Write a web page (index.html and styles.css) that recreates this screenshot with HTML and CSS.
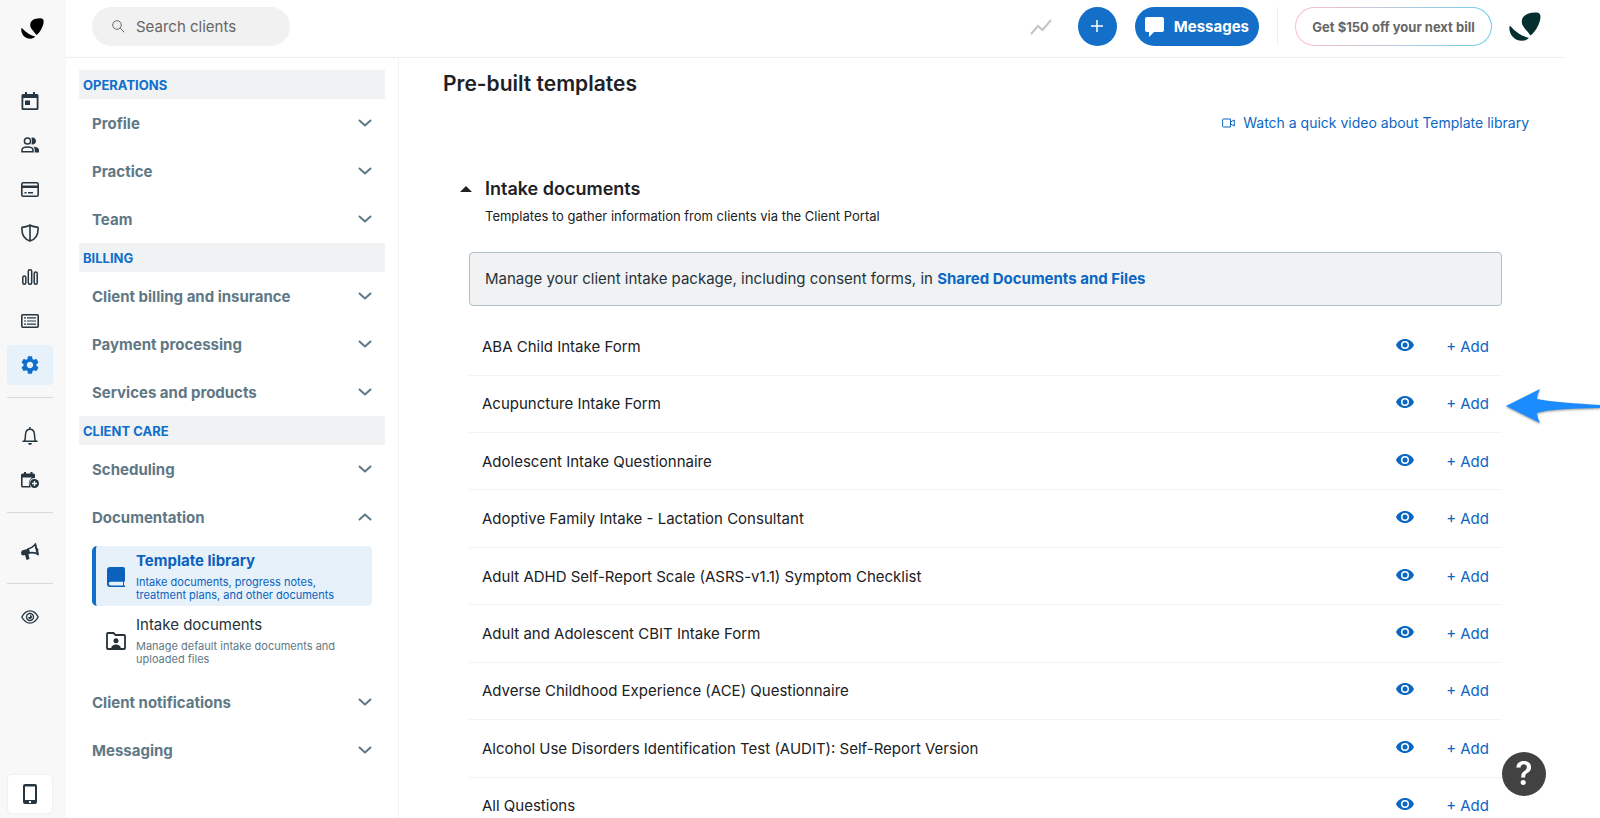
FILE: index.html
```html
<!DOCTYPE html>
<html lang="en">
<head>
<meta charset="UTF-8">
<meta name="viewport" content="width=device-width, initial-scale=1.0">
<title>Template library</title>
<link rel="stylesheet" href="styles.css">
</head>
<body>

<!-- shared icons -->
<svg class="sprite" width="0" height="0" aria-hidden="true">
  <symbol id="logo" viewBox="0 0 32 29">
    <path d="M31.500 5C31.500 1.500 30 .300 26 .400C18 .500 12.800 4 12.800 10C12.800 15 18.500 18.500 21.300 23.500C27 20 31.500 10 31.500 5Z"/>
    <path d="M.500 14.500C-.500 21 4.500 28.800 13 28.800C16.500 28.800 18.500 27.500 19.800 25.800C14 24.800 7 20.500 1.500 14.300C1 14 .600 14 .500 14.500Z"/>
  </symbol>
  <symbol id="chevron" viewBox="0 0 14 8">
    <path d="M1.500 1.500L7 6.500L12.500 1.500" fill="none" stroke="currentColor" stroke-width="2" stroke-linecap="round" stroke-linejoin="round"/>
  </symbol>
  <symbol id="eye" viewBox="0 0 18 12">
    <path fill-rule="evenodd" d="M9 0C5 0 1.500 2.400 0 6C1.500 9.600 5 12 9 12S16.500 9.600 18 6C16.500 2.400 13 0 9 0ZM9 10A4 4 0 1 1 9 2A4 4 0 0 1 9 10ZM9 3.500A2.500 2.500 0 1 0 9 8.500A2.500 2.500 0 0 0 9 3.500Z"/>
  </symbol>
</svg>

<div class="app">
  <nav class="rail" aria-label="Main">
    <a class="rail-logo" href="#" aria-label="Home"><svg width="23" height="21"><use href="#logo"/></svg></a>
    <div class="rail-group">
      <a href="#" aria-label="Calendar"><svg width="18" height="18" viewBox="0 0 18 18"><path fill-rule="evenodd" d="M4 0H6V2H12V0H14V2H16Q17.500 2 17.500 3.500V16.500Q17.500 18 16 18H2Q.500 18 .500 16.500V3.500Q.500 2 2 2H4ZM2.300 6V16.200H15.700V6ZM4 8.500H9V13H4Z"/></svg></a>
      <a href="#" aria-label="Clients"><svg width="18" height="16" viewBox="0 0 18 16"><circle cx="6.500" cy="4" r="3.100" fill="none" stroke="currentColor" stroke-width="1.500"/><path d="M1 14.800V13C1 11 4 10 6.500 10S12 11 12 13V14.800Z" fill="none" stroke="currentColor" stroke-width="1.500"/><path d="M10.500 .500Q11.500 3.800 10.500 7.400C13 8 15 6.300 15 4S13 0 10.500 .500ZM12.500 9.500C16 10 18 11.200 18 13V15.500H13.700V13C13.700 11.500 13.300 10.300 12.500 9.500Z"/></svg></a>
      <a href="#" aria-label="Billing"><svg width="18" height="15" viewBox="0 0 18 15"><rect x=".8" y=".8" width="16.400" height="13.400" rx="1.500" fill="none" stroke="currentColor" stroke-width="1.600"/><path d="M1 3.500H17V6H1ZM3.500 10H5.500V11.500H3.500ZM7 10H12V11.500H7Z"/></svg></a>
      <a href="#" aria-label="Insurance"><svg width="18" height="18" viewBox="0 0 18 18"><path d="M9 1C7 2.500 4 3 1 3.400C.500 10 2.500 15 9 17C15.500 15 17.500 10 17 3.400C14 3 11 2.500 9 1ZM9 1V17" fill="none" stroke="currentColor" stroke-width="1.600" stroke-linejoin="round"/></svg></a>
      <a href="#" aria-label="Reports"><svg width="16" height="16" viewBox="0 0 16 16"><g fill="none" stroke="currentColor" stroke-width="1.500"><rect x=".8" y="7" width="3" height="8.200" rx="1.500"/><rect x="6.300" y=".8" width="3.400" height="14.400" rx="1.500"/><rect x="12.200" y="3" width="3" height="12.200" rx="1.500"/></g></svg></a>
      <a href="#" aria-label="Activity"><svg width="18" height="14" viewBox="0 0 18 14"><rect x=".8" y=".8" width="16.400" height="12.400" rx="1" fill="none" stroke="currentColor" stroke-width="1.600"/><path d="M3 3.300H5V4.500H3ZM6 3.300H15V4.500H6ZM3 6.400H5V7.600H3ZM6 6.400H15V7.600H6ZM3 9.500H5V10.700H3ZM6 9.500H15V10.700H6Z"/></svg></a>
      <a class="active" href="#" aria-label="Settings"><svg width="18" height="18" viewBox="2 2 20 20"><path d="M19.140 12.940c.04-.3.060-.61.060-.94 0-.32-.02-.64-.07-.94l2.030-1.580c.18-.14.230-.41.120-.61l-1.920-3.320c-.12-.22-.37-.29-.59-.22l-2.390.96c-.5-.38-1.030-.7-1.620-.94l-.36-2.540c-.04-.24-.24-.41-.48-.41h-3.840c-.24 0-.43.170-.47.410l-.36 2.540c-.59.240-1.130.570-1.620.940l-2.390-.96c-.22-.08-.47 0-.59.220L2.740 8.870c-.12.210-.08.470.120.610l2.030 1.580c-.05.300-.09.630-.09.940s.02.640.07.940l-2.030 1.580c-.18.140-.23.410-.12.610l1.920 3.320c.12.220.37.290.59.220l2.390-.96c.5.380 1.030.700 1.620.940l.36 2.540c.05.240.240.410.480.410h3.840c.24 0 .44-.17.470-.41l.36-2.540c.59-.24 1.130-.56 1.620-.94l2.390.96c.22.080.470 0 .59-.22l1.920-3.320c.12-.22.070-.47-.12-.61l-2.010-1.580zM12 15.600c-1.980 0-3.600-1.620-3.600-3.600s1.620-3.600 3.600-3.600 3.600 1.620 3.600 3.600-1.620 3.600-3.600 3.600z"/></svg></a>
    </div>
    <div class="rail-group">
      <a href="#" aria-label="Notifications"><svg width="16" height="18" viewBox="0 0 16 18"><path d="M1 14.200H15M2.500 14C3.500 12.500 3.300 10.500 3.500 7.500C3.700 4.500 5.500 2.300 8 2.300S12.300 4.500 12.500 7.500C12.700 10.500 12.500 12.500 13.500 14M8 .500V2" fill="none" stroke="currentColor" stroke-width="1.500" stroke-linecap="round"/><path d="M6 16H10Q9.500 18 8 18T6 16Z"/></svg></a>
      <a href="#" aria-label="Requests"><svg width="18" height="16" viewBox="0 0 18 16"><path d="M3 0H5V1.500H9.500V0H11.500V1.500H12.500Q14 1.500 14 3V6Q9 6 8.500 11Q8.500 13 9.800 15.500H1.500Q0 15.500 0 14V3Q0 1.500 1.500 1.500H3ZM1.600 5.500V14H8Q7 8.500 11 5.500Z" fill-rule="evenodd"/><circle cx="13.500" cy="11.500" r="4.500"/><path d="M13.500 9V14M11 11.500H16" stroke="#f8f8f8" stroke-width="1.300"/></svg></a>
    </div>
    <div class="rail-group">
      <a href="#" aria-label="Announcements"><svg width="18" height="17" viewBox="0 0 18 17"><path d="M7 6Q11 5 14.200 1.500L16.500 11Q12 9 8 10Z" fill="none" stroke="currentColor" stroke-width="1.600" stroke-linejoin="round"/><path d="M13.500 .500L15 0L16 5Q18 5.500 17.200 8L18 12L16.500 12.500ZM1 7.500L8 5.500L9 10.700L7.500 11L8.500 16L5.500 17L4 12L2 12.500Q-.500 12 .200 9Z"/></svg></a>
    </div>
    <div class="rail-group">
      <a href="#" aria-label="Preview"><svg width="18" height="14" viewBox="0 0 18 14"><path d="M.800 7C3 3 5.500 .900 9 .900S15 3 17.200 7C15 11 12.500 13.100 9 13.100S3 11 .800 7Z" fill="none" stroke="currentColor" stroke-width="1.400"/><circle cx="9" cy="7" r="3.500" fill="none" stroke="currentColor" stroke-width="1.400"/><path d="M9 5A2 2 0 1 1 7 7H9Z"/></svg></a>
    </div>
    <button class="rail-mobile" type="button" aria-label="Mobile app"><svg width="14" height="20" viewBox="0 0 14 20"><path fill-rule="evenodd" d="M2 0H12Q14 0 14 2V18Q14 20 12 20H2Q0 20 0 18V2Q0 0 2 0ZM2 2.500V16H12V2.500ZM6 17V19H8V17Z"/></svg></button>
  </nav>

  <div class="page">
    <header class="topbar">
      <label class="search">
        <svg width="13" height="13" viewBox="0 0 13 13"><circle cx="5" cy="5" r="4.300"/><path d="M8.200 8.200L12.300 12.300"/></svg>
        <input type="text" placeholder="Search clients" aria-label="Search clients">
      </label>
      <div class="top-actions">
        <svg class="trend" width="22" height="16" viewBox="0 0 22 16"><path d="M1 15L8 7L12.500 11L21 1"/></svg>
        <button class="add" type="button" aria-label="Create"><svg width="12" height="12" viewBox="0 0 12 12"><path d="M6 0V12M0 6H12" stroke="currentColor" stroke-width="1.500"/></svg></button>
        <button class="messages" type="button"><svg width="19" height="20" viewBox="0 0 19 20"><path d="M2 0H17Q19 0 19 2V13Q19 15 17 15H9L4 20V15H2Q0 15 0 13V2Q0 0 2 0Z"/></svg>Messages</button>
        <span class="divider"></span>
        <button class="promo" type="button">Get $150 off your next bill</button>
        <a class="account" href="#" aria-label="Account"><svg width="32" height="29"><use href="#logo"/></svg></a>
      </div>
    </header>

    <div class="columns">
      <nav class="settings" aria-label="Settings">
        <h2>OPERATIONS</h2>
        <button class="item" type="button">Profile<svg width="14" height="8"><use href="#chevron"/></svg></button>
        <button class="item" type="button">Practice<svg width="14" height="8"><use href="#chevron"/></svg></button>
        <button class="item" type="button">Team<svg width="14" height="8"><use href="#chevron"/></svg></button>
        <h2>BILLING</h2>
        <button class="item" type="button">Client billing and insurance<svg width="14" height="8"><use href="#chevron"/></svg></button>
        <button class="item" type="button">Payment processing<svg width="14" height="8"><use href="#chevron"/></svg></button>
        <button class="item" type="button">Services and products<svg width="14" height="8"><use href="#chevron"/></svg></button>
        <h2>CLIENT CARE</h2>
        <button class="item" type="button">Scheduling<svg width="14" height="8"><use href="#chevron"/></svg></button>
        <button class="item open" type="button">Documentation<svg width="14" height="8"><use href="#chevron"/></svg></button>
        <div class="submenu">
          <a class="sub selected" href="#">
            <svg width="20" height="20" viewBox="0 0 20 20"><path fill-rule="evenodd" d="M4 0H17Q19 0 19 2V14.500H18V18.500H19V20H4Q1 20 1 17V3Q1 0 4 0ZM4.500 14.800Q2.800 15 2.800 16.600T4.500 18.400H17V14.800Z"/></svg>
            <span>
              <strong>Template library</strong>
              <small>Intake documents, progress notes, treatment plans, and other documents</small>
            </span>
          </a>
          <a class="sub" href="#">
            <svg width="20" height="18" viewBox="0 0 20 18"><path d="M2 1H7.500L9.500 3H18Q19 3 19 4V16Q19 17 18 17H2Q1 17 1 16V2Q1 1 2 1Z" fill="none" stroke="currentColor" stroke-width="1.800"/><circle cx="10" cy="8.800" r="2.500"/><path d="M5 16.500C5.500 13.500 7.500 12.500 10 12.500S14.500 13.500 15 16.500Z"/></svg>
            <span>
              <strong>Intake documents</strong>
              <small>Manage default intake documents and uploaded files</small>
            </span>
          </a>
        </div>
        <button class="item" type="button">Client notifications<svg width="14" height="8"><use href="#chevron"/></svg></button>
        <button class="item" type="button">Messaging<svg width="14" height="8"><use href="#chevron"/></svg></button>
      </nav>

      <main class="content">
        <h1>Pre-built templates</h1>
        <a class="video" href="#"><svg width="13" height="10" viewBox="0 0 13 10"><path d="M1.500 1H8.500V9H1.500Q.600 9 .600 8V2Q.600 1 1.500 1ZM8.500 4L12.300 2V8L8.500 6"/></svg>Watch a quick video about Template library</a>

        <section class="group">
          <div class="group-title">
            <svg width="12" height="6" viewBox="0 0 12 6"><path d="M6 0L12 6H0Z"/></svg>
            <h3>Intake documents</h3>
          </div>
          <p class="group-text">Templates to gather information from clients via the Client Portal</p>

          <p class="notice">Manage your client intake package, including consent forms, in <a href="#">Shared Documents and Files</a></p>

          <table class="templates">
            <tr><td>ABA Child Intake Form</td><td class="view"><button type="button" aria-label="Preview"><svg width="18" height="12"><use href="#eye"/></svg></button></td><td class="plus"><button type="button">+ Add</button></td></tr>
            <tr><td>Acupuncture Intake Form</td><td class="view"><button type="button" aria-label="Preview"><svg width="18" height="12"><use href="#eye"/></svg></button></td><td class="plus"><button type="button">+ Add</button>
              <svg class="pointer" width="95" height="36" viewBox="0 0 95 36"><path d="M1 18L35 1Q32 7 32 11C46 14 70 15.500 95 17V20C70 20.500 45 21 32 25Q32 29 35 35Z"/></svg></td></tr>
            <tr><td>Adolescent Intake Questionnaire</td><td class="view"><button type="button" aria-label="Preview"><svg width="18" height="12"><use href="#eye"/></svg></button></td><td class="plus"><button type="button">+ Add</button></td></tr>
            <tr><td>Adoptive Family Intake - Lactation Consultant</td><td class="view"><button type="button" aria-label="Preview"><svg width="18" height="12"><use href="#eye"/></svg></button></td><td class="plus"><button type="button">+ Add</button></td></tr>
            <tr><td>Adult ADHD Self-Report Scale (ASRS-v1.1) Symptom Checklist</td><td class="view"><button type="button" aria-label="Preview"><svg width="18" height="12"><use href="#eye"/></svg></button></td><td class="plus"><button type="button">+ Add</button></td></tr>
            <tr><td>Adult and Adolescent CBIT Intake Form</td><td class="view"><button type="button" aria-label="Preview"><svg width="18" height="12"><use href="#eye"/></svg></button></td><td class="plus"><button type="button">+ Add</button></td></tr>
            <tr><td>Adverse Childhood Experience (ACE) Questionnaire</td><td class="view"><button type="button" aria-label="Preview"><svg width="18" height="12"><use href="#eye"/></svg></button></td><td class="plus"><button type="button">+ Add</button></td></tr>
            <tr><td>Alcohol Use Disorders Identification Test (AUDIT): Self-Report Version</td><td class="view"><button type="button" aria-label="Preview"><svg width="18" height="12"><use href="#eye"/></svg></button></td><td class="plus"><button type="button">+ Add</button></td></tr>
            <tr><td>All Questions</td><td class="view"><button type="button" aria-label="Preview"><svg width="18" height="12"><use href="#eye"/></svg></button></td><td class="plus"><button type="button">+ Add</button></td></tr>
          </table>
        </section>
      </main>
    </div>
  </div>
</div>

<button class="help" type="button" aria-label="Help">?</button>

</body>
</html>
```
FILE: styles.css
```css
* {
  box-sizing: border-box;
}
body {
  margin: 0;
  font-family: Inter, "Liberation Sans", sans-serif;
  font-size: 15px;
  color: #202124;
  background-color: #fff;
}
h1, h2, h3, p {
  margin: 0;
}
a {
  color: #0b67c2;
  text-decoration: none;
}
button {
  font-family: inherit;
  border: none;
  background: none;
  padding: 0;
  cursor: pointer;
}
svg {
  fill: currentColor;
  flex-shrink: 0;
}
.sprite {
  position: absolute;
}
.app {
  display: flex;
  height: 100vh;
  overflow: hidden;
}

/* icon rail */
.rail {
  width: 66px;
  flex-shrink: 0;
  padding: 18px 13px 5px 7px;
  background-color: #f8f8f8;
  display: flex;
  flex-direction: column;
}
.rail a {
  display: flex;
  align-items: center;
  justify-content: center;
  height: 40px;
  border-radius: 4px;
  color: #263640;
}
.rail .rail-logo {
  height: 21px;
  margin: 0 0 42px 4px;
  color: #000;
}
.rail-group {
  display: flex;
  flex-direction: column;
  gap: 4px;
  padding-bottom: 12px;
}
.rail-group + .rail-group {
  border-top: 1px solid #d8dadb;
  padding-top: 18px;
}
.rail-group:last-of-type {
  padding-top: 13px;
}
.rail .active {
  background-color: #e6f1fa;
  color: #0f6fcb;
}
.rail-mobile {
  margin: auto 1px 0;
  height: 38px;
  border-radius: 4px;
  background-color: #fff;
  box-shadow: 0 0 2px #ddd;
  color: #263640;
  display: flex;
  align-items: center;
  justify-content: center;
}

/* top bar */
.page {
  flex: 1;
  min-width: 0;
  display: flex;
  flex-direction: column;
}
.topbar {
  height: 58px;
  flex-shrink: 0;
  margin-right: 35px;
  padding: 7px 24px 0 26px;
  border-bottom: 1px solid #eee;
  display: flex;
  justify-content: space-between;
}
.search {
  width: 198px;
  height: 39px;
  padding-left: 20px;
  border-radius: 20px;
  background-color: #f1f1f1;
  display: flex;
  align-items: center;
  gap: 11px;
}
.search svg {
  fill: none;
  stroke: #666;
}
.search input {
  width: 130px;
  padding: 0;
  border: none;
  outline: none;
  background: none;
  font: inherit;
}
.search input::placeholder {
  color: #666;
}
.top-actions {
  display: flex;
  height: 39px;
  align-items: center;
}
.trend {
  fill: none;
  stroke: #c4c4c4;
  stroke-width: 2;
  margin-right: 26px;
}
.add {
  width: 39px;
  height: 39px;
  border-radius: 50%;
  background-color: #136fc8;
  color: #fff;
  margin-right: 18px;
}
.messages {
  height: 39px;
  padding: 0 10px;
  border-radius: 20px;
  background-color: #136fc8;
  color: #fff;
  font-size: 15px;
  font-weight: 700;
  display: flex;
  align-items: center;
  gap: 10px;
}
.divider {
  width: 1px;
  height: 39px;
  margin: 0 17px 0 18px;
  background-color: #eee;
}
.promo {
  width: 197px;
  height: 39px;
  border: 1px solid transparent;
  border-radius: 20px;
  background: linear-gradient(#fff, #fff) padding-box, linear-gradient(90deg, #ffbfc6, #b9c9dc, #6ccfe9) border-box;
  color: #666;
  font-size: 13px;
  font-weight: 700;
}
.account {
  height: 29px;
  margin-left: 17px;
  color: #052e2f;
}

/* settings menu */
.columns {
  flex: 1;
  min-height: 0;
  display: flex;
}
.settings {
  width: 333px;
  flex-shrink: 0;
  padding: 12px 13px 0;
  border-right: 1px solid #f3f3f3;
}
.settings h2 {
  height: 29px;
  padding-left: 4px;
  background-color: #f0f2f4;
  color: #0f6fcb;
  font-size: 13px;
  line-height: 30px;
  font-weight: 700;
}
.item {
  width: 100%;
  height: 48px;
  padding: 0 13px;
  display: flex;
  align-items: center;
  justify-content: space-between;
  color: #607885;
  font-size: 15px;
  font-weight: 700;
}
.item.open svg {
  transform: rotate(180deg);
}
.submenu {
  padding: 5px 13px 4px;
}
.sub {
  display: flex;
  align-items: center;
  gap: 10px;
  padding: 5px 8px 4px 14px;
  border-radius: 5px;
  color: #263238;
  margin-bottom: 4px;
}
.sub strong {
  display: block;
  font-size: 15px;
  line-height: 20px;
  font-weight: 400;
}
.sub small {
  display: block;
  margin-top: 5px;
  color: #607885;
  font-size: 11px;
  line-height: 13px;
}
.sub.selected {
  padding-left: 10px;
  border-left: 4px solid #0f6fcb;
  background-color: #e6f1fa;
  color: #0b62bd;
}
.sub.selected strong {
  font-weight: 700;
}
.sub.selected small {
  color: #0b62bd;
}

/* templates */
.content {
  flex: 1;
  min-width: 0;
  padding: 12px 71px 0 44px;
  display: flex;
  flex-direction: column;
}
.content h1 {
  font-size: 21px;
  line-height: 28px;
  font-weight: 600;
}
.video {
  align-self: flex-end;
  margin: 15px 0 43px;
  font-size: 14px;
  line-height: 20px;
  display: flex;
  align-items: center;
  gap: 8px;
}
.video svg {
  fill: none;
  stroke: currentColor;
}
.group {
  margin: 0 27px 0 26px;
}
.group-title {
  display: flex;
  align-items: center;
  gap: 13px;
  margin-left: -9px;
}
.group-title h3 {
  font-size: 18px;
  line-height: 26px;
  font-weight: 600;
}
.group-text {
  margin: 4px 0 26px 16px;
  font-size: 13px;
  line-height: 20px;
}
.notice {
  padding: 15px;
  border: 1px solid #b0bec5;
  border-radius: 4px;
  background-color: #f1f2f4;
  color: #263238;
  line-height: 22px;
}
.notice a {
  font-weight: 700;
}
.templates {
  width: 100%;
  height: 516px;
  margin-top: 13px;
  border-collapse: collapse;
}
.templates td {
  padding: 0 13px;
  border-bottom: 1px solid #f3f3f3;
}
.templates button {
  color: #0b67c2;
  font-size: 15px;
}
.templates .view {
  width: 52px;
  padding: 0 17px 2px;
}
.templates .view svg {
  display: block;
}
.templates .plus {
  width: 71px;
  position: relative;
  text-align: right;
  white-space: nowrap;
}
.pointer {
  position: absolute;
  top: 12px;
  left: 100%;
  margin-left: 3px;
  color: #1a8cff;
  filter: drop-shadow(0 1px 1px #999);
}
.help {
  position: fixed;
  right: 54px;
  bottom: 22px;
  width: 44px;
  height: 44px;
  border-radius: 50%;
  background-color: #424242;
  color: #fff;
  font-size: 32px;
  line-height: 44px;
  font-weight: 600;
}
```
